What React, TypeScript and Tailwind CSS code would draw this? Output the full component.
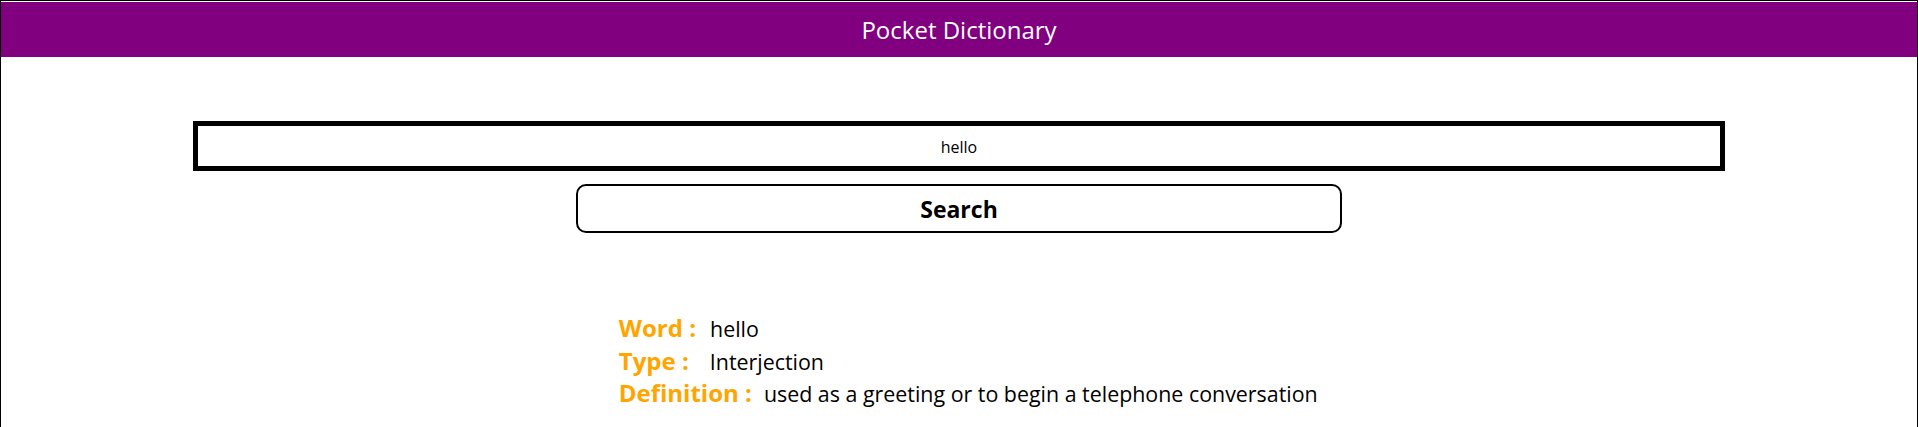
import React from "react";

export default function App() {
  const rows = [
    { label: "Word :", value: "hello", gap: "ml-[14px]" },
    { label: "Type :", value: "Interjection", gap: "ml-[21px]" },
    { label: "Definition :", value: "used as a greeting or to begin a telephone conversation", gap: "ml-[12px]" },
  ];
  return (
    <div className="min-h-screen border-x border-t border-black bg-white" style={{ fontFamily: '"Open Sans", "Noto Sans", sans-serif' }}>
      <header className="mt-px h-[55px] bg-[#800080] flex items-center justify-center">
        <h1 className="text-[24px] text-white font-normal pt-px">Pocket Dictionary</h1>
      </header>
      <div className="mt-[64px] flex flex-col items-center">
        <input
          className="w-[80%] h-[50px] border-[5px] border-black pt-[2px] text-center text-[16px] text-black outline-none"
          defaultValue="hello"
          style={{ fontFamily: '"Open Sans", "Noto Sans", sans-serif' }}
        />
        <button className="mt-[13px] w-[40%] h-[49px] border-2 border-black rounded-[10px] bg-white pt-px text-[23px] font-bold text-black">
          Search
        </button>
      </div>
      <div className="mt-[80px] mx-auto w-[40%] pl-[43px]">
        {rows.map((r) => (
          <div key={r.label} className="flex items-baseline h-[32.5px] leading-[30px] whitespace-nowrap">
            <span className="text-[24px] font-bold text-[#FFA500]">{r.label}</span>
            <span className={`${r.gap} text-[21.4px] text-black`}>{r.value}</span>
          </div>
        ))}
      </div>
    </div>
  );
}
